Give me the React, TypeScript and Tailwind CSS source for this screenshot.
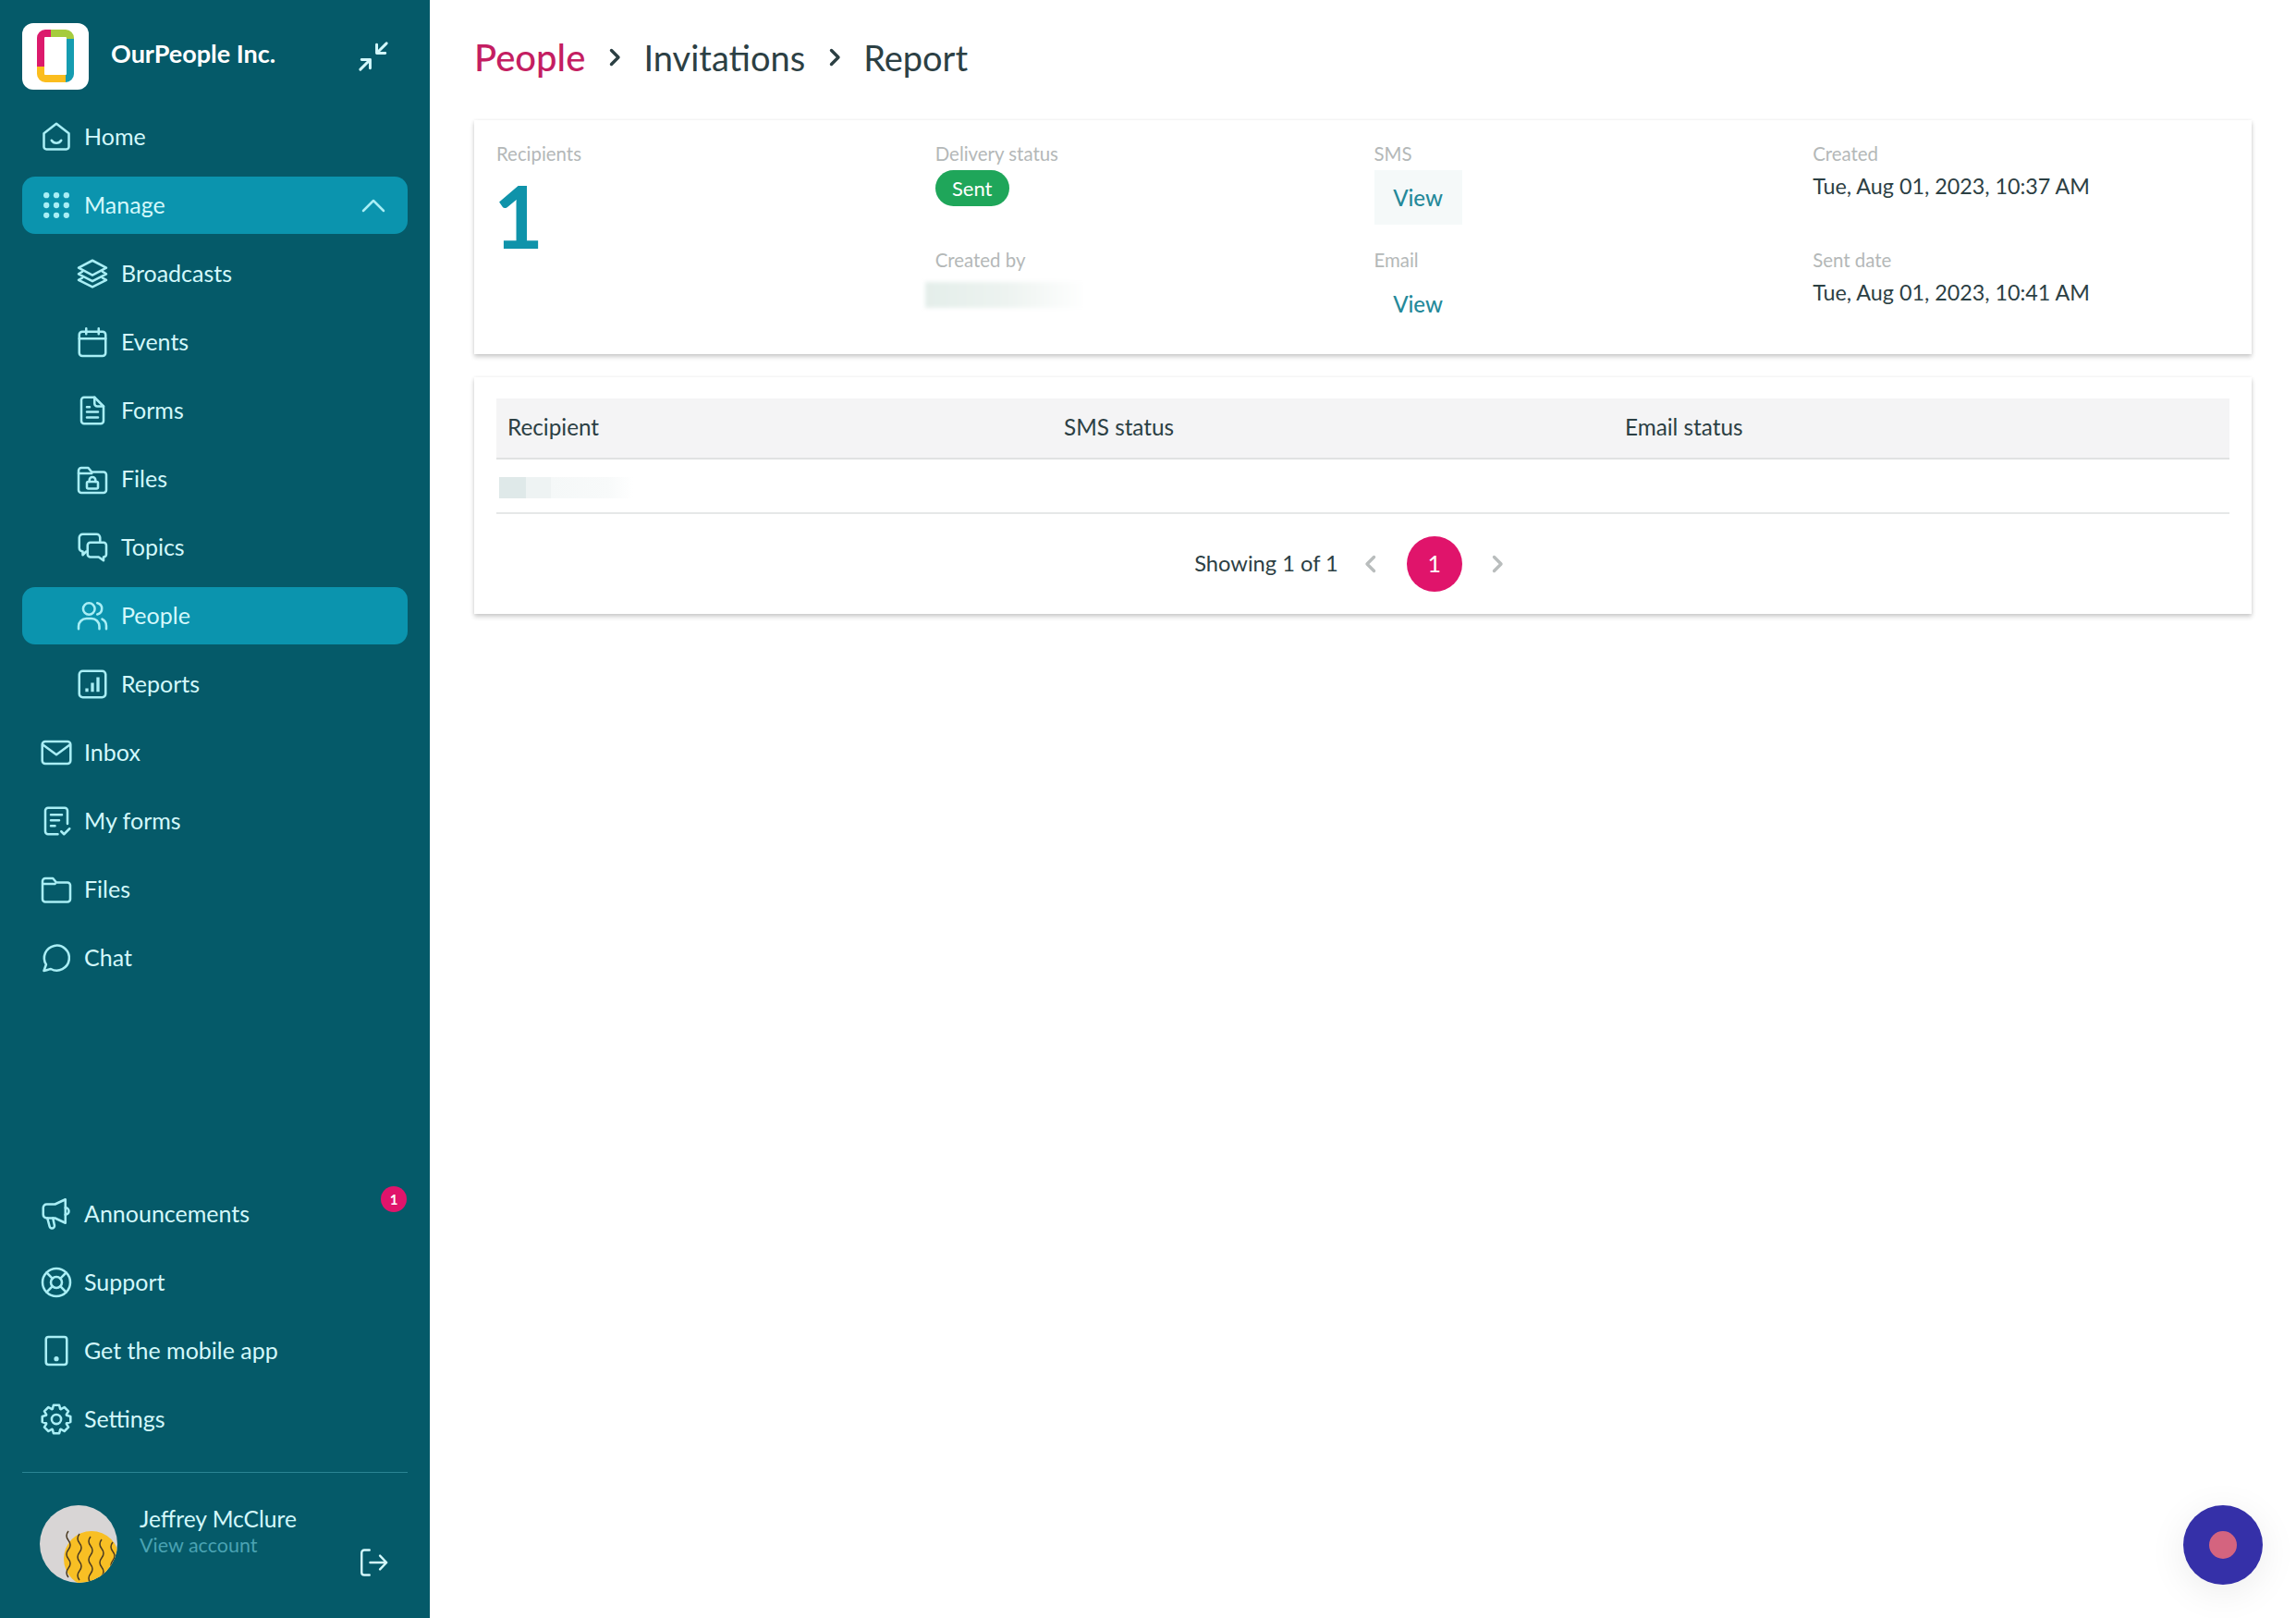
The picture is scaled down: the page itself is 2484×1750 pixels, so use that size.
import type { ReactNode } from "react";

function Ico({ children, size = 36 }: { children: ReactNode; size?: number }) {
  return (
    <svg width={size} height={size} viewBox="0 0 24 24" fill="none" stroke="currentColor" strokeWidth="1.7" strokeLinecap="round" strokeLinejoin="round" className="shrink-0 text-[#a9eef5]">
      {children}
    </svg>
  );
}

// eight rounded teeth, easier to compute than to write out
function gearPath() {
  const pts: string[] = [];
  for (let i = 0; i < 8; i++) {
    const a = (i * Math.PI) / 4 - Math.PI / 2;
    const step = 0.2;
    const p = (r: number, t: number) => `${(12 + r * Math.cos(t)).toFixed(2)} ${(12 + r * Math.sin(t)).toFixed(2)}`;
    pts.push(p(7.9, a - 0.36), p(10.4, a - step), p(10.4, a + step), p(7.9, a + 0.36));
  }
  return `M${pts.join("L")}Z`;
}

const icons: Record<string, ReactNode> = {
  home: (
    <>
      <path d="M3 9.500 12 2.500l9 7v9.700a1.800 1.800 0 0 1-1.800 1.800H4.800A1.800 1.800 0 0 1 3 19.200z" />
      <path d="M8.500 14.500c1.600 2.600 5.400 2.600 7 0" />
    </>
  ),
  manage: (
    <g fill="currentColor" stroke="none">
      {[4.8, 12, 19.2].map((x) =>
        [4.8, 12, 19.2].map((y) => <circle key={`${x}-${y}`} cx={x} cy={y} r="2.1" />),
      )}
    </g>
  ),
  broadcasts: (
    <>
      <path d="M12 2.500 22 7.800l-10 5.300L2 7.800z" />
      <path d="M4.800 10.500 2 12.200l10 5.200 10-5.200-2.800-1.700" />
      <path d="M4.800 15 2 16.600l10 5 10-5-2.800-1.600" />
    </>
  ),
  events: (
    <>
      <rect x="2.500" y="4.500" width="19" height="17.500" rx="2.200" />
      <path d="M2.500 9.500h19M7.500 2.200v4M16.500 2.200v4" />
    </>
  ),
  forms: (
    <>
      <path d="M13.500 2.500H6a2 2 0 0 0-2 2v15a2 2 0 0 0 2 2h12a2 2 0 0 0 2-2V9z" />
      <path d="M13.500 2.500V7a2 2 0 0 0 2 2H20M8 13h8M8 17h8M8 9.500h2" />
    </>
  ),
  lockfiles: (
    <>
      <path d="M2 6a2 2 0 0 1 2-2h5l2.500 3H20a2 2 0 0 1 2 2v11a2 2 0 0 1-2 2H4a2 2 0 0 1-2-2z" />
      <path d="M2 8h9.500" />
      <rect x="8" y="14" width="8" height="5" rx="1" />
      <path d="M9.800 14v-1.200a2.200 2.200 0 0 1 4.400 0V14" />
    </>
  ),
  topics: (
    <>
      <path d="M17.500 8V5A2.500 2.500 0 0 0 15 2.500H5A2.500 2.500 0 0 0 2.500 5v7.500A2.500 2.500 0 0 0 5 15v2.500L7.500 15" />
      <path d="M10.500 8.500H20a2 2 0 0 1 2 2V17a2 2 0 0 1-2 2v2.500L16.500 19h-6a2 2 0 0 1-2-2v-6.500a2 2 0 0 1 2-2z" />
    </>
  ),
  people: (
    <>
      <circle cx="9.500" cy="7" r="4.200" />
      <path d="M2 21.500v-1.800A5.700 5.700 0 0 1 7.700 14h3.600a5.700 5.700 0 0 1 5.700 5.700v1.800" />
      <path d="M15.500 2.800a4.200 4.200 0 0 1 0 8.200M19 14.400a5.500 5.500 0 0 1 3 5v2.100" />
    </>
  ),
  reports: (
    <>
      <rect x="2.500" y="2.500" width="19" height="19" rx="2.500" />
      <path d="M8 17.500v-2.500M12 17.500v-6.500M16 17.500V7" strokeWidth="2.200" strokeLinecap="butt" />
    </>
  ),
  inbox: (
    <>
      <rect x="1.800" y="4" width="20.400" height="16" rx="2.200" />
      <path d="m2.500 6.500 9.500 7 9.500-7" />
    </>
  ),
  myforms: (
    <>
      <path d="M13 21.500H6a2 2 0 0 1-2-2v-15a2 2 0 0 1 2-2h12a2 2 0 0 1 2 2V14" />
      <path d="M8 7.500h8M8 11.500h6M8 15.500h3M15.500 19.500l2 2 4-4" />
    </>
  ),
  files: <path d="M2 6a2 2 0 0 1 2-2h5.500L12 7h8a2 2 0 0 1 2 2v10a2 2 0 0 1-2 2H4a2 2 0 0 1-2-2zM2 8h9" />,
  chat: <path d="M3 21.300 4.600 16.800A9 9 0 1 1 8 20a9 9 0 0 1-.6.100c-1.600.6-3 1-4.400 1.200z" />,
  announcements: (
    <>
      <path d="M2.500 7.500A2.500 2.500 0 0 1 5 5h6l7.500-3.500v17L11 15H5a2.500 2.500 0 0 1-2.500-2.500z" />
      <path d="M18.500 7.500a2.500 2.500 0 0 1 0 5M5.500 15l1.600 6a1.800 1.800 0 0 0 3.500-.9L9.500 15" />
    </>
  ),
  support: (
    <>
      <circle cx="12" cy="12" r="10" />
      <circle cx="12" cy="12" r="4" />
      <path d="m5 5 4.200 4.200M19 5l-4.200 4.200M5 19l4.200-4.200M19 19l-4.200-4.200" />
    </>
  ),
  mobile: (
    <>
      <rect x="4.500" y="2" width="15" height="20" rx="1.800" />
      <circle cx="12" cy="17.800" r="0.900" fill="currentColor" />
    </>
  ),
  settings: (
    <>
      <path d={gearPath()} />
      <circle cx="12" cy="12" r="3.400" />
    </>
  ),
};

function NavRow({ icon, label, sub, active }: { icon: string; label: string; sub?: boolean; active?: boolean }) {
  return (
    <div className={`flex h-[62px] items-center rounded-[14px] text-[25px] text-[#d3f8fb] ${sub ? "pl-[58px]" : "pl-[19px]"} ${active ? "bg-[#0b94ae]" : ""}`}>
      <Ico>{icons[icon]}</Ico>
      <span className={sub ? "ml-[13px]" : "ml-[12px]"}>{label}</span>
    </div>
  );
}

function Logo() {
  return (
    <div className="h-[72px] w-[72px] shrink-0 rounded-[12px] bg-white">
      <svg width="72" height="72" viewBox="0 0 72 72" fill="none" strokeWidth="8">
        <path d="M31 11h-6a5 5 0 0 0-5 5v31" stroke="#dc1a6c" />
        <path d="M31 11h16a5 5 0 0 1 5 5v1" stroke="#a5cc3d" />
        <path d="M52 17v38a5 5 0 0 1-5 5" stroke="#159cb0" />
        <path d="M20 47v8a5 5 0 0 0 5 5h22" stroke="#fbbd1e" />
      </svg>
    </div>
  );
}

function Avatar() {
  return (
    <svg width="84" height="84" viewBox="0 0 84 84" className="shrink-0 rounded-full">
      <rect width="84" height="84" fill="#d8d5d5" />
      <circle cx="56" cy="58" r="30" fill="#f8bf24" />
      <g fill="none" stroke="#4b3b22" strokeWidth="1.500">
        {[31, 43, 55, 67, 79].map((x, i) => (
          <path key={x} d={`M${x} ${28 + i * 3}q-4 5 0 10t0 10 0 10 0 10 0 10`} />
        ))}
      </g>
    </svg>
  );
}

function Sidebar() {
  return (
    <aside className="flex h-full w-[465px] shrink-0 flex-col bg-[#055a69] px-[24px]">
      <div className="flex h-[117px] items-start pt-[25px]">
        <Logo />
        <span className="ml-[24px] mt-[13px] text-[27px] font-bold text-white">OurPeople Inc.</span>
        <div className="ml-auto mr-[20px] mt-[19px] text-[#d3f8fb]">
          <svg width="34" height="34" viewBox="0 0 24 24" fill="none" stroke="currentColor" strokeWidth="2.100" strokeLinecap="round" strokeLinejoin="round">
            <path d="M2 22l7-7M3 14.500h6.500V21M22 2l-7 7M21 9.500h-6.500V3" />
          </svg>
        </div>
      </div>
      <nav className="flex flex-col gap-[12px]">
        <NavRow icon="home" label="Home" />
        <div className="relative">
          <NavRow icon="manage" label="Manage" active />
          <svg width="26" height="16" viewBox="0 0 26 16" fill="none" stroke="#a9eef5" strokeWidth="2.500" strokeLinecap="round" strokeLinejoin="round" className="absolute right-[24px] top-[23px]">
            <path d="M2 14 13 3l11 11" />
          </svg>
        </div>
        <NavRow icon="broadcasts" label="Broadcasts" sub />
        <NavRow icon="events" label="Events" sub />
        <NavRow icon="forms" label="Forms" sub />
        <NavRow icon="lockfiles" label="Files" sub />
        <NavRow icon="topics" label="Topics" sub />
        <NavRow icon="people" label="People" sub active />
        <NavRow icon="reports" label="Reports" sub />
        <NavRow icon="inbox" label="Inbox" />
        <NavRow icon="myforms" label="My forms" />
        <NavRow icon="files" label="Files" />
        <NavRow icon="chat" label="Chat" />
      </nav>
      <div className="mt-auto flex flex-col gap-[12px]">
        <div className="relative">
          <NavRow icon="announcements" label="Announcements" />
          <span className="absolute right-[1px] top-[1px] flex h-[28px] w-[28px] items-center justify-center rounded-full bg-[#e0146b] text-[15px] font-bold text-white">1</span>
        </div>
        <NavRow icon="support" label="Support" />
        <NavRow icon="mobile" label="Get the mobile app" />
        <NavRow icon="settings" label="Settings" />
      </div>
      <div className="mt-[26px] flex h-[158px] items-start border-t border-[#2b8494] pl-[19px] pt-[35px]">
        <Avatar />
        <div className="ml-[24px] flex flex-col">
          <span className="text-[24.6px] leading-[30px] text-[#d3f8fb]">Jeffrey McClure</span>
          <span className="text-[21.5px] leading-[26px] text-[#4aa3b3]">View account</span>
        </div>
        <svg width="34" height="34" viewBox="0 0 24 24" fill="none" stroke="#d3f8fb" strokeWidth="1.700" strokeLinecap="round" strokeLinejoin="round" className="ml-auto mr-[20px] mt-[45px]">
          <path d="M9 2.500H5a2 2 0 0 0-2 2v15a2 2 0 0 0 2 2h4M9.500 12H22M17 6.800l5 5.200-5 5.200" />
        </svg>
      </div>
    </aside>
  );
}

function Chev({ left, className = "" }: { left?: boolean; className?: string }) {
  return (
    <svg width="13" height="20" viewBox="0 0 13 20" fill="none" stroke="currentColor" strokeWidth="3.400" strokeLinecap="round" strokeLinejoin="round" className={`shrink-0 ${className}`}>
      <path d={left ? "M10.500 2.500 3 10l7.500 7.500" : "M2.500 2.500 10 10l-7.500 7.500"} />
    </svg>
  );
}

function Field({ label, children, className = "" }: { label: string; children?: ReactNode; className?: string }) {
  return (
    <div className={className}>
      <div className="text-[20.4px] leading-[24px] text-[#b4b8b8]">{label}</div>
      {children}
    </div>
  );
}

function ViewBtn({ shaded }: { shaded?: boolean }) {
  return (
    <div className={`mt-[6px] flex h-[59px] w-[95px] items-center justify-center text-[24px] font-medium text-[#25899a] ${shaded ? "bg-[#f5f9f9]" : ""}`}>
      View
    </div>
  );
}

function DateValue({ children }: { children: ReactNode }) {
  return <div className="mt-[8px] text-[23.3px] leading-[30px] text-[#2c4044]">{children}</div>;
}

export default function App() {
  return (
    <div className="relative flex h-screen w-full overflow-hidden bg-white font-['Lato',sans-serif]">
      <Sidebar />
      <main className="flex min-w-0 flex-1 flex-col pl-[48px] pr-[48px]">
        <header className="flex h-[124px] items-center text-[38px] text-[#2c4044]">
          <span className="text-[40px] font-medium text-[#c41e62]">People</span>
          <Chev className="ml-[26px] mr-[24px]" />
          <span>Invitations</span>
          <Chev className="ml-[26px] mr-[24px]" />
          <span>Report</span>
        </header>

        <section className="mt-[6px] h-[253px] bg-white px-[24px] pt-[24px] shadow-[0_3px_5px_rgba(0,0,0,0.2),0_0_4px_rgba(0,0,0,0.06)]">
          <div className="grid grid-cols-4 grid-rows-[115px_115px] gap-x-[24px]">
            <Field label="Recipients" className="row-span-2">
              <div className="-ml-[3px] mt-[7px] text-[93px] font-bold leading-[96px] text-[#0f93aa]">1</div>
            </Field>
            <Field label="Delivery status">
              <span className="mt-[6px] flex h-[39px] w-[80px] items-center justify-center rounded-full bg-[#1fa65a] text-[22px] text-white">Sent</span>
            </Field>
            <Field label="SMS">
              <ViewBtn shaded />
            </Field>
            <Field label="Created">
              <DateValue>Tue, Aug 01, 2023, 10:37 AM</DateValue>
            </Field>
            <Field label="Created by" className="col-start-2">
              <div className="-ml-[11px] mt-[12px] h-[28px] w-[175px] bg-gradient-to-r from-[#e4eeea] via-[#edf3f0] to-white blur-[2px]" />
            </Field>
            <Field label="Email">
              <ViewBtn />
            </Field>
            <Field label="Sent date">
              <DateValue>Tue, Aug 01, 2023, 10:41 AM</DateValue>
            </Field>
          </div>
        </section>

        <section className="mt-[25px] h-[256px] bg-white px-[24px] pt-[23px] shadow-[0_3px_5px_rgba(0,0,0,0.2),0_0_4px_rgba(0,0,0,0.06)]">
          <div className="grid h-[66px] grid-cols-[602px_607px_1fr] items-center border-b-2 border-[#e0e2e2] bg-[#f4f4f5] pb-[2px] pl-[12px] text-[24.3px] text-[#2c4044]">
            <span>Recipient</span>
            <span>SMS status</span>
            <span>Email status</span>
          </div>
          <div className="h-[59px] border-b-2 border-[#e6e8e8] pl-[3px] pt-[19px]">
            <div className="flex h-[23px] w-[145px]">
              <div className="w-[29px] bg-[#dfe9e9]" />
              <div className="w-[27px] bg-[#eef3f3]" />
              <div className="flex-1 bg-gradient-to-r from-[#f5f8f8] via-[#f8fafa] via-70% to-white" />
            </div>
          </div>
          <div className="flex items-center justify-center pr-[30px] pt-[24px] text-[23.7px] text-[#2c4044]">
            <span>Showing 1 of 1</span>
            <Chev left className="ml-[28px] text-[#b9bdbd]" />
            <span className="ml-[33px] mr-[32px] flex h-[60px] w-[60px] items-center justify-center rounded-full bg-[#e0146b] text-[25px] text-white">1</span>
            <Chev className="text-[#b9bdbd]" />
          </div>
        </section>
      </main>
      <div className="absolute left-[2362px] top-[1628px] flex h-[86px] w-[86px] items-center justify-center rounded-full bg-[#3530a8] shadow-[0_8px_40px_rgba(0,0,0,0.08)]">
        <span className="h-[30px] w-[30px] rounded-full bg-[#d4647f]" />
      </div>
    </div>
  );
}
